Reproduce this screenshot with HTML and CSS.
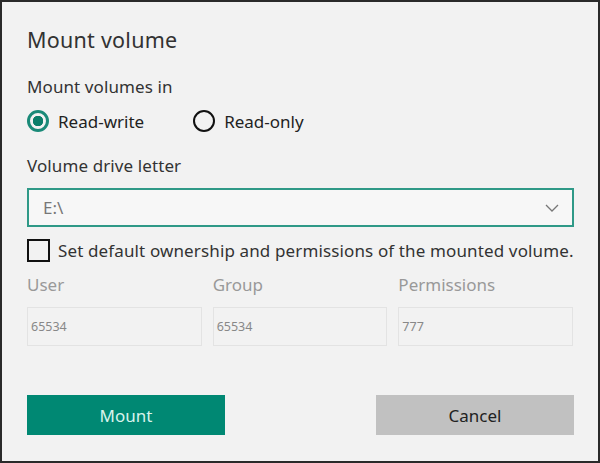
FILE: index.html
```html
<!DOCTYPE html>
<html>
<head>
<meta charset="utf-8">
<link rel="stylesheet" href="styles.css">
</head>
<body>
<div class="dialog">
  <h1 class="title">Mount volume</h1>
  <div class="label">Mount volumes in</div>
  <div class="radios">
    <label class="radio"><span class="dot on"></span>Read-write</label>
    <label class="radio second"><span class="dot"></span>Read-only</label>
  </div>
  <div class="label letter">Volume drive letter</div>
  <div class="select">
    <span class="value">E:\</span>
    <svg class="chev" width="14" height="8" viewBox="0 0 14 8"><path d="M1 1 L7 7 L13 1" fill="none" stroke="#777" stroke-width="1.3"/></svg>
  </div>
  <label class="check"><span class="box"></span>Set default ownership and permissions of the mounted volume.</label>
  <div class="fields">
    <div class="field"><div class="flabel">User</div><div class="input">65534</div></div>
    <div class="field"><div class="flabel">Group</div><div class="input">65534</div></div>
    <div class="field"><div class="flabel">Permissions</div><div class="input">777</div></div>
  </div>
  <div class="buttons">
    <button class="btn primary">Mount</button>
    <button class="btn secondary">Cancel</button>
  </div>
</div>
</body>
</html>
```
FILE: styles.css
```css
* { box-sizing: border-box; }
html, body { margin: 0; padding: 0; }
body {
  width: 600px;
  height: 463px;
  background: #f2f2f2;
  font-family: "Noto Sans", "Open Sans", sans-serif;
  color: #333;
}
.dialog {
  width: 600px;
  height: 463px;
  border: 2px solid #2a2a2a;
  background: #f2f2f2;
  padding: 25px 25px 0 25px;
}
.title {
  margin: 0;
  font-size: 21.5px;
  font-weight: 400;
  line-height: 26px;
  color: #333;
  letter-spacing: 0.25px;
}
.label {
  margin-top: 24px;
  font-size: 17px;
  line-height: 20px;
  color: #333;
  letter-spacing: 0.1px;
}
.radios {
  display: flex;
  align-items: center;
  margin-top: 12px;
  height: 24px;
}
.radio {
  display: flex;
  align-items: center;
  font-size: 17px;
  color: #222;
}
.radio.second { margin-left: 49px; }
.dot {
  width: 22px;
  height: 22px;
  border-radius: 50%;
  border: 2px solid #111;
  margin-right: 9px;
  position: relative;
  flex: none;
}
.dot.on {
  border: 3px solid #1a8a78;
  background: radial-gradient(circle, #0b7e6a 0 5px, #f2f2f2 5.5px);
}
.label.letter { margin-top: 23px; }
.select {
  margin-top: 12px;
  height: 39px;
  border: 2px solid #2f9987;
  background: #f7f7f7;
  display: flex;
  align-items: center;
  justify-content: space-between;
  padding: 0 13px 0 14px;
  width: 547px;
}
.select .value { font-size: 17px; color: #777; }
.chev { display: block; }
.check {
  display: flex;
  align-items: center;
  margin-top: 12px;
  font-size: 17px;
  color: #333;
  white-space: nowrap;
  letter-spacing: 0.13px;
}
.box {
  width: 23px;
  height: 23px;
  border: 2px solid #111;
  margin-right: 8px;
  flex: none;
}
.fields {
  display: flex;
  gap: 11px;
  margin-top: 12px;
  width: 546px;
}
.field { flex: 1; }
.flabel {
  font-size: 17px;
  line-height: 22px;
  color: #999;
}
.input {
  margin-top: 11px;
  height: 39px;
  border: 1px solid #e3e3e3;
  background: #f2f2f2;
  font-size: 12.5px;
  color: #888;
  display: flex;
  align-items: center;
  padding-left: 3px;
}
.buttons {
  display: flex;
  justify-content: space-between;
  margin-top: 49px;
  width: 547px;
}
.btn {
  width: 198px;
  height: 40px;
  border: none;
  font-family: "Noto Sans", "Open Sans", sans-serif;
  font-size: 17px;
  padding: 0;
}
.btn.primary { background: #008873; color: #d8f3ec; }
.btn.secondary { background: #c1c1c1; color: #222; }
```
